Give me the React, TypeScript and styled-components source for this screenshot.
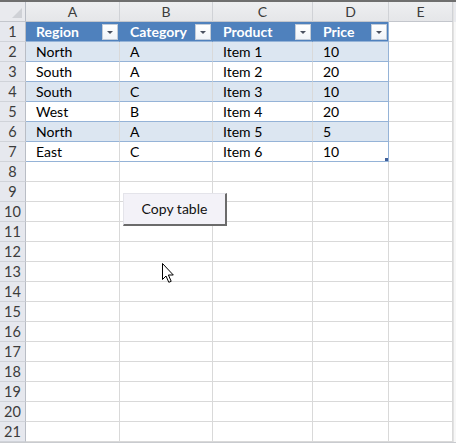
import React from "react";
import styled, { createGlobalStyle, css } from "styled-components";

const GlobalStyle = createGlobalStyle`
  html, body {
    margin: 0;
    padding: 0;
    background: #ffffff;
  }
  body {
    font-family: Lato, "Liberation Sans", Arial, sans-serif;
    overflow: hidden;
  }
`;

const COLS = ["A", "B", "C", "D", "E"];
const COL_WIDTHS = [94, 93, 100, 76, 64];
const ROW_COUNT = 21;

const HEADERS = ["Region", "Category", "Product", "Price"];
const DATA: string[][] = [
  ["North", "A", "Item 1", "10"],
  ["South", "A", "Item 2", "20"],
  ["South", "C", "Item 3", "10"],
  ["West", "B", "Item 4", "20"],
  ["North", "A", "Item 5", "5"],
  ["East", "C", "Item 6", "10"],
];

const GRID = "#d9d9d9";
const TABLE_LINE = "#95b3d7";

const Sheet = styled.div`
  position: relative;
  width: 456px;
  height: 443px;
  overflow: hidden;
  background: #ffffff;
  display: flex;
  flex-direction: column;
`;

const TopEdge = styled.div`
  height: 2px;
  background: #6f6f6f;
  flex: none;
`;

const BottomEdge = styled.div`
  height: 2px;
  background: #c9cbcf;
  flex: none;
`;

const Grid = styled.div`
  display: grid;
  grid-template-columns: 26px ${COL_WIDTHS.map((w) => `${w}px`).join(" ")} 3px;
  grid-template-rows: 20px;
  grid-auto-rows: 20px;
  flex: none;
`;

const baseCell = css`
  box-sizing: border-box;
  border-right: 1px solid ${GRID};
  border-bottom: 1px solid ${GRID};
  font-size: 14px;
  line-height: 19px;
  white-space: nowrap;
  overflow: hidden;
`;

const Corner = styled.div`
  ${baseCell};
  background: #e9eaee;
  border-right-color: #b9bdc5;
  border-bottom-color: #c3c6cc;
  display: flex;
  justify-content: flex-end;
  align-items: flex-end;
  padding: 0 3px 3px 0;
`;

const CornerMark = styled.span`
  width: 0;
  height: 0;
  border-left: 10px solid transparent;
  border-bottom: 10px solid #cfd1d6;
`;

const ColHeader = styled.div`
  ${baseCell};
  background: linear-gradient(#eeeff1, #e5e6e9);
  border-right-color: #d0d2d6;
  border-bottom-color: #c3c6cc;
  color: #3c3c3c;
  text-align: center;
`;

const EdgeCell = styled.div<{ $head?: boolean }>`
  box-sizing: border-box;
  border-left: 1px solid #e2e2e2;
  background: ${(p) => (p.$head ? "#e9eaee" : "#f7f7f7")};
`;

const RowLabel = styled.div`
  ${baseCell};
  font-size: 14.5px;
  background: #e6e8ee;
  border-right-color: #b9bdc5;
  border-bottom-color: #d0d3d9;
  color: #3c3c3c;
  text-align: center;
`;

type Kind = "head" | "band" | "plain" | "empty";

const Cell = styled.div<{ $kind: Kind; $tableRight?: boolean }>`
  ${baseCell};
  position: relative;
  padding-left: 10px;
  color: #000000;
  ${(p) =>
    p.$kind === "head" &&
    css`
      background: #4f81bd;
      color: #ffffff;
      font-weight: 700;
      border-right-color: #4f81bd;
      border-bottom-color: ${TABLE_LINE};
      display: flex;
      align-items: center;
      justify-content: space-between;
      padding-right: 1px;
    `}
  ${(p) =>
    p.$kind === "band" &&
    css`
      background: #dce6f1;
      border-bottom-color: ${TABLE_LINE};
    `}
  ${(p) =>
    p.$kind === "plain" &&
    css`
      border-bottom-color: ${TABLE_LINE};
    `}
  ${(p) =>
    p.$tableRight &&
    css`
      border-right-color: ${TABLE_LINE};
    `}
`;

const FilterButton = styled.span`
  box-sizing: border-box;
  width: 16px;
  height: 16px;
  flex: none;
  border: 1px solid #c3ccd8;
  background: linear-gradient(#ffffff, #f1f4f9);
  display: flex;
  align-items: center;
  justify-content: center;
`;

const FilterArrow = styled.span`
  width: 0;
  height: 0;
  margin-top: 1px;
  border-left: 3px solid transparent;
  border-right: 3px solid transparent;
  border-top: 3px solid #4a5160;
`;

const FillHandle = styled.span`
  position: absolute;
  right: -1px;
  bottom: -1px;
  width: 4px;
  height: 4px;
  background: #3f5f9a;
`;

const CopyButton = styled.button`
  position: absolute;
  left: 123px;
  top: 193px;
  width: 104px;
  height: 33px;
  box-sizing: border-box;
  margin: 0;
  padding: 0 0 2px;
  background: #f3f2f8;
  border-top: 1px solid #e4e4ea;
  border-left: 1px solid #e4e4ea;
  border-right: 2px solid #6b6b6b;
  border-bottom: 2px solid #6b6b6b;
  font-family: Lato, "Liberation Sans", Arial, sans-serif;
  font-size: 14px;
  color: #111111;
  cursor: default;
`;

const Pointer = styled.svg`
  position: absolute;
  left: 161px;
  top: 262px;
  pointer-events: none;
`;

function TableRow({ row, index }: { row: string[]; index: number }) {
  const isLast = index === DATA.length - 1;
  const kind: Kind = index % 2 === 0 ? "band" : "plain";
  return (
    <>
      <RowLabel>{index + 2}</RowLabel>
      {row.map((value, c) => (
        <Cell key={c} $kind={kind} $tableRight={c === 3}>
          {value}
          {isLast && c === 3 && <FillHandle />}
        </Cell>
      ))}
      <Cell $kind="empty" />
      <EdgeCell />
    </>
  );
}

export default function App() {
  const emptyRows = Array.from({ length: ROW_COUNT - 1 - DATA.length }, (_, i) => i + DATA.length + 2);
  return (
    <>
      <GlobalStyle />
      <Sheet>
        <TopEdge />
        <Grid>
          <Corner>
            <CornerMark />
          </Corner>
          {COLS.map((c) => (
            <ColHeader key={c}>{c}</ColHeader>
          ))}
          <EdgeCell $head />

          <RowLabel>1</RowLabel>
          {HEADERS.map((h, i) => (
            <Cell key={h} $kind="head" $tableRight={i === 3}>
              <span>{h}</span>
              <FilterButton>
                <FilterArrow />
              </FilterButton>
            </Cell>
          ))}
          <Cell $kind="empty" />
          <EdgeCell />

          {DATA.map((row, i) => (
            <TableRow key={i} row={row} index={i} />
          ))}

          {emptyRows.map((r) => (
            <React.Fragment key={r}>
              <RowLabel>{r}</RowLabel>
              {COLS.map((c) => (
                <Cell key={c} $kind="empty" />
              ))}
              <EdgeCell />
            </React.Fragment>
          ))}
        </Grid>
        <BottomEdge />

        <CopyButton type="button">Copy table</CopyButton>

        <Pointer width="14" height="22" viewBox="0 0 14 22">
          <path
            d="M1.5 1.5 L1.5 17.5 L5 14 L7.8 20.3 L10.2 19.3 L7.4 13 L12.3 13 Z"
            fill="#ffffff"
            stroke="#000000"
            strokeWidth="1"
            strokeLinejoin="miter"
          />
        </Pointer>
      </Sheet>
    </>
  );
}
